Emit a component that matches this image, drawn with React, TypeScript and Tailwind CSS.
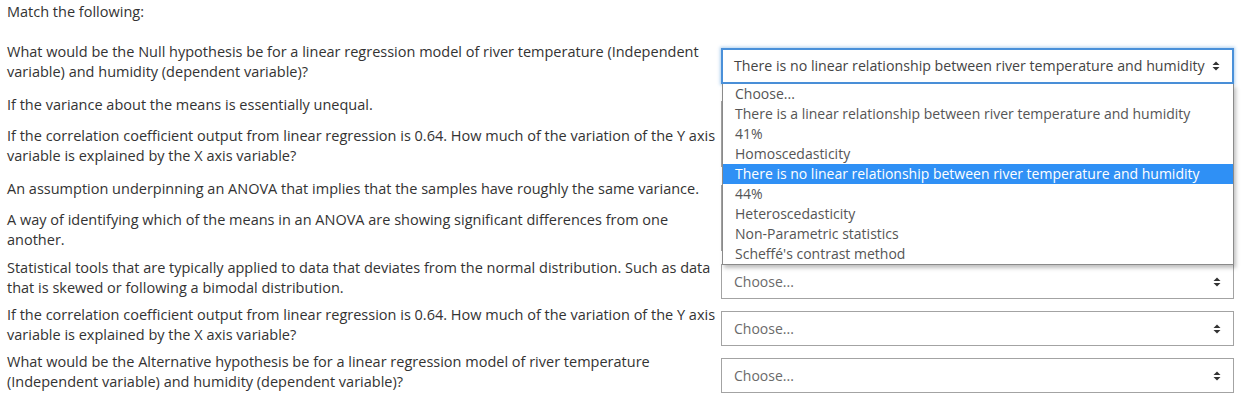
import React from "react";

const rows: { lines: string[]; h: string }[] = [
  {
    lines: [
      "What would be the Null hypothesis be for a linear regression model of river temperature (Independent",
      "variable) and humidity (dependent variable)?",
    ],
    h: "h-[53px]",
  },
  { lines: ["If the variance about the means is essentially unequal."], h: "h-[31px]" },
  {
    lines: [
      "If the correlation coefficient output from linear regression is 0.64. How much of the variation of the Y axis",
      "variable is explained by the X axis variable?",
    ],
    h: "h-[53px]",
  },
  {
    lines: ["An assumption underpinning an ANOVA that implies that the samples have roughly the same variance."],
    h: "h-[31px]",
  },
  {
    lines: [
      "A way of identifying which of the means in an ANOVA are showing significant differences from one",
      "another.",
    ],
    h: "h-[48px]",
  },
  {
    lines: [
      "Statistical tools that are typically applied to data that deviates from the normal distribution. Such as data",
      "that is skewed or following a bimodal distribution.",
    ],
    h: "h-[47px]",
  },
  {
    lines: [
      "If the correlation coefficient output from linear regression is 0.64. How much of the variation of the Y axis",
      "variable is explained by the X axis variable?",
    ],
    h: "h-[47px]",
  },
  {
    lines: [
      "What would be the Alternative hypothesis be for a linear regression model of river temperature",
      "(Independent variable) and humidity (dependent variable)?",
    ],
    h: "h-[47px]",
  },
];

const options = [
  "Choose...",
  "There is a linear relationship between river temperature and humidity",
  "41%",
  "Homoscedasticity",
  "There is no linear relationship between river temperature and humidity",
  "44%",
  "Heteroscedasticity",
  "Non-Parametric statistics",
  "Scheffé's contrast method",
];

function Arrows() {
  return (
    <svg width="8" height="10" viewBox="0 0 8 10" className="shrink-0">
      <path d="M4 0.5 L7.5 4 L0.5 4 Z" fill="#333" />
      <path d="M0.5 6 L7.5 6 L4 9.5 Z" fill="#333" />
    </svg>
  );
}

function Select({
  value,
  focused,
  open,
  covered,
}: {
  value: string;
  focused?: boolean;
  open?: boolean;
  covered?: boolean;
}) {
  return (
    <div className="relative mt-[6px] w-[513px] shrink-0">
      <div
        className={
          focused
            ? "flex h-[36px] items-center justify-between border-2 border-[#4a90d9] bg-white pl-[11px] pr-[12px] text-[14.2px] shadow-[0_0_3px_1px_rgba(80,150,220,0.45)]"
            : "flex h-[35px] items-center justify-between border border-[#a3a3a3] bg-white pl-[12px] pr-[12px]"
        }
      >
        {!covered && <span className={focused ? "text-[#444]" : "text-[#6a6a6a]"}>{value}</span>}
        {!covered && <Arrows />}
      </div>
      {open && (
        <div className="absolute left-[1px] top-full z-10 w-[512px] border border-t-0 border-[#8a8a8a] bg-white text-[14px] shadow-[2px_3px_4px_rgba(0,0,0,0.25)]">
          {options.map((o, i) => (
            <div
              key={i}
              className={
                i === 4
                  ? "h-[20px] bg-[#2f90f5] pl-[12px] leading-[19px] text-white"
                  : "h-[20px] pl-[12px] leading-[19px] text-[#555]"
              }
            >
              {o}
            </div>
          ))}
        </div>
      )}
    </div>
  );
}

export default function App() {
  return (
    <div
      className="h-[403px] w-[1243px] overflow-hidden bg-white px-[7px] text-[14px] leading-[20px] text-[#333]"
      style={{ fontFamily: '"Open Sans", "Noto Sans", sans-serif' }}
    >
      <div className="h-[42px] pt-[2px] text-[14.5px]">Match the following:</div>
      <div className="flex flex-col">
        {rows.map((r, i) => (
          <div key={i} className={`flex items-start gap-[4px] ${r.h}`}>
            <div className="w-[710px] shrink-0 whitespace-nowrap text-[14.5px]">
              {r.lines.map((l, j) => (
                <div key={j}>{l}</div>
              ))}
            </div>
            {i === 0 ? (
              <Select
                value="There is no linear relationship between river temperature and humidity"
                focused
                open
              />
            ) : (
              <Select value="Choose..." covered={i >= 1 && i <= 4} />
            )}
          </div>
        ))}
      </div>
    </div>
  );
}
